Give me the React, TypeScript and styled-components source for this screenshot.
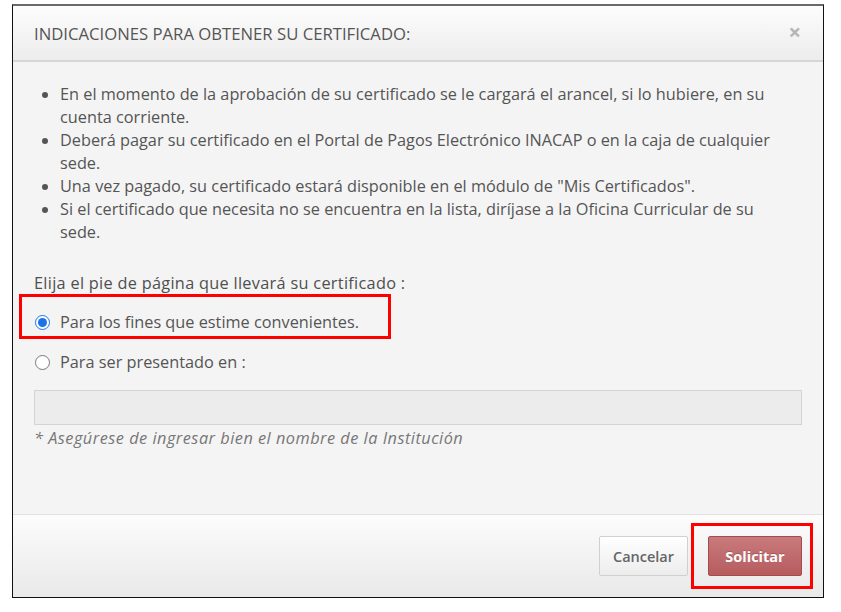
import styled, { createGlobalStyle } from 'styled-components';

const GlobalStyle = createGlobalStyle`
  body {
    margin: 0;
    background: #ffffff;
    font-family: 'Open Sans', 'Liberation Sans', sans-serif;
  }
`;

const INDICATIONS = [
  'En el momento de la aprobación de su certificado se le cargará el arancel, si lo hubiere, en su cuenta corriente.',
  'Deberá pagar su certificado en el Portal de Pagos Electrónico INACAP o en la caja de cualquier sede.',
  'Una vez pagado, su certificado estará disponible en el módulo de "Mis Certificados".',
  'Si el certificado que necesita no se encuentra en la lista, diríjase a la Oficina Curricular de su sede.',
];

export default function App() {
  return (
    <>
      <GlobalStyle />
      <Modal>
        <Header>
          <Title>INDICACIONES PARA OBTENER SU CERTIFICADO:</Title>
          <Close>×</Close>
        </Header>
        <Body>
          <List>
            {INDICATIONS.map((text) => (
              <li key={text}>{text}</li>
            ))}
          </List>
          <Question>Elija el pie de página que llevará su certificado :</Question>
          <RadioRow highlighted>
            <Radio type="radio" name="pie" defaultChecked />
            Para los fines que estime convenientes.
          </RadioRow>
          <RadioRow>
            <Radio type="radio" name="pie" />
            Para ser presentado en :
          </RadioRow>
          <Input disabled />
          <Note>* Asegúrese de ingresar bien el nombre de la Institución</Note>
        </Body>
        <Footer>
          <Button>Cancelar</Button>
          <Highlight>
            <Button primary>Solicitar</Button>
          </Highlight>
        </Footer>
      </Modal>
    </>
  );
}

//styles

const Modal = styled.div`
  margin: 4px 0 0 12px;
  width: 812px;
  height: 594px;
  box-sizing: border-box;
  border: 1px solid #111;
  border-top: 2px solid #6a6a6a;
  display: flex;
  flex-direction: column;
  background: #f4f4f4;
`;

const Header = styled.div`
  height: 54px;
  flex-shrink: 0;
  display: flex;
  align-items: center;
  justify-content: space-between;
  padding: 0 22px 0 21px;
  background: linear-gradient(#fdfdfd, #ececec);
  border-bottom: 2px solid #d6d6d6;
`;

const Title = styled.h4`
  margin: 0;
  font-size: 16.7px;
  font-weight: 400;
  color: #555;
`;

const Close = styled.span`
  font-size: 22px;
  font-weight: 700;
  color: #b5b5b5;
  line-height: 1;
  margin-top: -4px;
`;

const Body = styled.div`
  flex: 1;
  padding: 21px 21px 0 21px;
  color: #555;
  font-size: 16.3px;
`;

const List = styled.ul`
  margin: 0;
  padding-left: 26px;
  line-height: 23px;
  width: 716px;
`;

const Question = styled.div`
  margin: 28px 0 7px;
  line-height: 23px;
  font-weight: 500;
  letter-spacing: 0.3px;
  color: #4f4f4f;
`;

const RadioRow = styled.label<{ highlighted?: boolean }>`
  position: relative;
  display: flex;
  align-items: center;
  gap: 10px;
  height: 40px;
  width: 354px;
  padding-left: 1px;
  &::after {
    content: '';
    display: ${(props) => (props.highlighted ? 'block' : 'none')};
    position: absolute;
    left: -15px;
    top: -8px;
    right: -2px;
    bottom: 3px;
    border: 3px solid #ff0000;
  }
`;

const Radio = styled.input`
  width: 15px;
  height: 15px;
  margin: 0;
  accent-color: #1a73e8;
`;

const Input = styled.input`
  display: block;
  margin-top: 8px;
  width: 768px;
  height: 35px;
  box-sizing: border-box;
  border: 1px solid #d4d4d4;
  background: #ececec;
`;

const Note = styled.div`
  margin-top: 2px;
  line-height: 22px;
  font-style: italic;
  letter-spacing: 0.5px;
  color: #777;
`;

const Footer = styled.div`
  height: 83px;
  flex-shrink: 0;
  box-sizing: border-box;
  display: flex;
  align-items: center;
  justify-content: flex-end;
  gap: 20px;
  padding: 0 21px 0 0;
  border-top: 1px solid #e2e2e2;
  background: linear-gradient(#fcfcfc, #e9e9e9);
`;

const Highlight = styled.div`
  position: relative;
  &::after {
    content: '';
    position: absolute;
    left: -17px;
    right: -11px;
    top: -13px;
    bottom: -13px;
    border: 3px solid #ff0000;
  }
`;

const Button = styled.button<{ primary?: boolean }>`
  height: 40px;
  width: ${(props) => (props.primary ? '94px' : '89px')};
  padding: 0;
  font-family: 'Open Sans', 'Liberation Sans', sans-serif;
  font-size: 14.5px;
  font-weight: ${(props) => (props.primary ? 700 : 600)};
  border-radius: 2px;
  cursor: pointer;
  color: ${(props) => (props.primary ? '#fff' : '#666')};
  border: 1px solid ${(props) => (props.primary ? '#a8494c' : '#d0d0d0')};
  background: ${(props) =>
    props.primary
      ? 'linear-gradient(#c97a7c, #b65c5f)'
      : 'linear-gradient(#ffffff, #ececec)'};
  text-shadow: ${(props) => (props.primary ? '0 -1px 0 rgba(0,0,0,0.2)' : 'none')};
`;
